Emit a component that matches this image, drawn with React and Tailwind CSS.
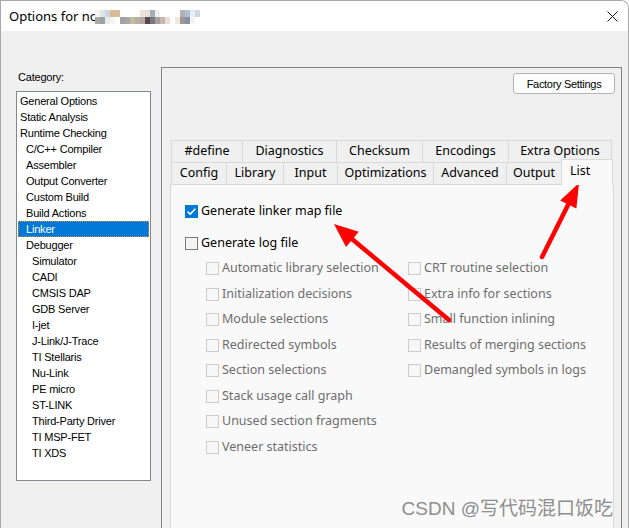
import React from "react";

const cats = [
  ["General Options", 0], ["Static Analysis", 0], ["Runtime Checking", 0],
  ["C/C++ Compiler", 1], ["Assembler", 1], ["Output Converter", 1], ["Custom Build", 1], ["Build Actions", 1], ["Linker", 1, true], ["Debugger", 1],
  ["Simulator", 2], ["CADI", 2], ["CMSIS DAP", 2], ["GDB Server", 2], ["I-jet", 2], ["J-Link/J-Trace", 2], ["TI Stellaris", 2], ["Nu-Link", 2], ["PE micro", 2], ["ST-LINK", 2], ["Third-Party Driver", 2], ["TI MSP-FET", 2], ["TI XDS", 2],
];
const indent = { 0: "pl-[2px]", 1: "pl-[8px]", 2: "pl-[14px]" };

const mosaicTop = ["#f4f4f4", "#dfe3e8", "#ccd6e0", "#d8bc98", "#d8bc98", "transparent", "transparent", "transparent", "transparent", "#ece4dc", "#e8e0d8", "#a4acb8", "#f0f0f0", "transparent", "transparent", "transparent", "transparent", "#b8b0b0", "#a8c0d8", "#e8eef4", "#d0d8e8", "transparent"];
const mosaicBot = ["#a8a8a8", "#98a4a4", "#e8ecec", "#f4f4f4", "transparent", "#a0a0a8", "#a8a8a4", "#c0bca0", "#b8b0a0", "#b0a8a4", "#584848", "#787880", "#a8a0a0", "#c8b8b0", "#e8e0d8", "transparent", "#f0e8e0", "#a09898", "#8890a0", "#f4f4f4", "transparent", "transparent"];

const row1 = [["#define", "w-[71px]"], ["Diagnostics", "w-[94px]"], ["Checksum", "w-[86px]"], ["Encodings", "w-[86px]"], ["Extra Options", "w-[104px] border-r"]];
const row2 = [["Config", "w-[55px]"], ["Library", "w-[57px]"], ["Input", "w-[54px]"], ["Optimizations", "w-[96px]"], ["Advanced", "w-[73px]"], ["Output", "w-[55px]"]];

const leftOpts = ["Automatic library selection", "Initialization decisions", "Module selections", "Redirected symbols", "Section selections", "Stack usage call graph", "Unused section fragments", "Veneer statistics"];
const rightOpts = ["CRT routine selection", "Extra info for sections", "Small function inlining", "Results of merging sections", "Demangled symbols in logs"];

function Box({ checked, disabled }) {
  if (checked) {
    return (
      <span className="w-[13px] h-[13px] shrink-0 bg-[#0078d7] flex items-center justify-center">
        <svg width="13" height="13" viewBox="0 0 13 13">
          <path d="M2.6 6.6 L5.2 9.1 L10.4 3.7" fill="none" stroke="#fff" strokeWidth="1.5" />
        </svg>
      </span>
    );
  }
  return (
    <span className={disabled ? "w-[13px] h-[13px] shrink-0 border border-[#cccccc] bg-[#f7f7f7]" : "w-[13px] h-[13px] shrink-0 border border-[#7a7a7a] bg-[#f4f4f4]"} />
  );
}

function Opt({ label, checked, disabled }) {
  return (
    <div className="flex items-center gap-[3px] h-[20px]">
      <Box checked={checked} disabled={disabled} />
      <span className={disabled ? "text-[#6d6d6d] whitespace-nowrap" : "text-black whitespace-nowrap"}>{label}</span>
    </div>
  );
}

export default function App() {
  const ui = { fontFamily: '"Noto Sans", "Liberation Sans", sans-serif' };
  const dlg = { fontFamily: '"Liberation Sans", Arial, sans-serif' };
  return (
    <div className="relative w-[629px] h-[528px] overflow-hidden bg-[#f0f0f0] border-l border-r border-t border-[#a8a8a8] rounded-tr-[8px]">
      {/* title bar */}
      <div className="h-[30px] bg-white flex items-center justify-between pl-[8px] pr-[10px]">
        <div className="flex items-center">
          <span className="text-[13px] text-black leading-none" style={ui}>Options for no</span>
          <div className="grid grid-cols-[repeat(22,5px)] grid-rows-[7px_7px] -ml-[3px] mt-[1px]">
            {mosaicTop.concat(mosaicBot).map((c, i) => (
              <span key={i} style={{ backgroundColor: c }} />
            ))}
          </div>
        </div>
        <svg width="11" height="11" viewBox="0 0 11 11">
          <path d="M0.5 0.5 L10.5 10.5 M10.5 0.5 L0.5 10.5" stroke="#1a1a1a" strokeWidth="1" />
        </svg>
      </div>

      {/* body */}
      <div className="flex pl-[15px]">
        <div className="w-[135px] shrink-0 pt-[39px]" style={dlg}>
          <div className="text-[11px] leading-[14px] pl-[2px] text-black tracking-[-0.2px]">Category:</div>
          <div className="mt-[7px] h-[390px] border border-[#828790] bg-white p-[1px]">
            {cats.map(([name, lvl, sel]) => (
              <div
                key={name}
                className={
                  "h-[16px] flex items-center text-[11px] tracking-[-0.2px] whitespace-nowrap " +
                  indent[lvl] +
                  (sel ? " bg-[#0078d7] text-white outline-1 outline-dotted -outline-offset-1 outline-[#c8902e]" : " text-black")
                }
              >
                {name}
              </div>
            ))}
          </div>
        </div>

        <div className="ml-[10px] mt-[36px] w-[461px] h-[480px] shrink-0 border border-[#828282]">
          <div className="flex justify-end pr-[6px] pt-[5px]">
            <div className="w-[102px] h-[21px] rounded-[3px] border border-[#b4b4b4] bg-[#fdfdfd] flex items-center justify-center text-[11px] tracking-[-0.3px] text-black pt-[1px]" style={dlg}>
              Factory Settings
            </div>
          </div>

          <div className="ml-[8px] mt-[46px] w-[444px] text-[12.5px]" style={ui}>
            <div className="flex h-[22px] pl-[1px]">
              {row1.map(([t, w]) => (
                <div key={t} className={"h-[22px] border-l border-t border-[#d9d9d9] bg-[#f0f0f0] flex items-center justify-center text-black whitespace-nowrap " + w}>
                  {t}
                </div>
              ))}
            </div>
            <div className="flex items-end h-[22px] pl-[1px]">
              {row2.map(([t, w]) => (
                <div key={t} className={"h-[22px] border-l border-t border-[#d9d9d9] bg-[#f0f0f0] flex items-center justify-center text-black whitespace-nowrap " + w}>
                  {t}
                </div>
              ))}
              <div className="relative z-10 w-[52px] h-[26px] -mb-px border-l border-t border-r border-[#d9d9d9] bg-[#f9f9f9] flex items-start pt-[2px] pl-[8px] justify-start text-black">
                List
              </div>
            </div>
            <div className="h-[360px] border border-[#d9d9d9] bg-[#f9f9f9] pl-[14px] pt-[16px]">
              <Opt label="Generate linker map file" checked />
              <div className="mt-[12px]">
                <Opt label="Generate log file" />
              </div>
              <div className="ml-[21px] mt-[3px] grid grid-cols-[202px_1fr] grid-flow-col grid-rows-[repeat(8,25.5px)]">
                {leftOpts.map((t) => (
                  <div key={t} className="flex items-center">
                    <Opt label={t} disabled />
                  </div>
                ))}
                {rightOpts.map((t) => (
                  <div key={t} className="flex items-center">
                    <Opt label={t} disabled />
                  </div>
                ))}
              </div>
            </div>
          </div>
        </div>
      </div>

      {/* annotation arrows */}
      <svg className="absolute inset-0 pointer-events-none" width="629" height="528" viewBox="0 0 629 528">
        <line x1="448" y1="319" x2="348" y2="235.5" stroke="#ff0000" strokeWidth="4.5" strokeLinecap="round" />
        <polygon points="333,223 357.8,230.7 345,246.1" fill="#ff0000" />
        <line x1="541" y1="256" x2="569" y2="200" stroke="#ff0000" strokeWidth="4.5" strokeLinecap="round" />
        <polygon points="578,182 575.4,207.5 559.2,199.5" fill="#ff0000" />
      </svg>

      {/* watermark */}
      <div
        className="absolute top-[497px] right-[15px] text-[19px] leading-[22px] text-[#8e8e8e] whitespace-nowrap"
        style={{ fontFamily: '"Liberation Sans", "Noto Sans CJK SC", sans-serif' }}
      >
        CSDN @写代码混口饭吃
      </div>
    </div>
  );
}
